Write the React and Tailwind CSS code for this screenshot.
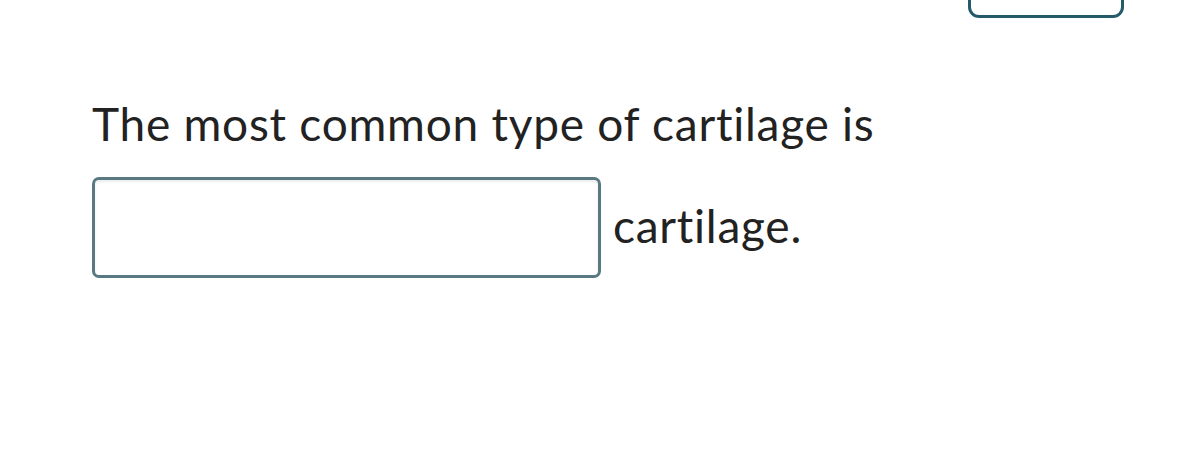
export default function App() {
  return (
    <div className="w-[1179px] h-[476px] bg-white overflow-hidden" style={{ fontFamily: "Lato, 'Open Sans', sans-serif", fontVariantLigatures: "none" }}>
      <div className="flex justify-end pr-[55px]">
        <div className="w-[156px] h-[40px] -mt-[22px] border-[3px] border-[#245a69] rounded-[11px]"></div>
      </div>
      <div className="pl-[92px] pt-[78px] text-[#222222] tracking-[0.75px]">
        <p className="text-[46px] leading-[56px]">The most common type of cartilage is</p>
        <div className="flex items-center mt-[25px]">
          <div className="w-[509px] h-[101px] border-[3px] border-[#587982] rounded-[7px] shadow-[inset_0_2px_3px_rgba(0,0,0,0.08)]"></div>
          <span className="ml-[12px] text-[46px] leading-[56px] -mt-[3px]">cartilage.</span>
        </div>
      </div>
    </div>
  );
}
